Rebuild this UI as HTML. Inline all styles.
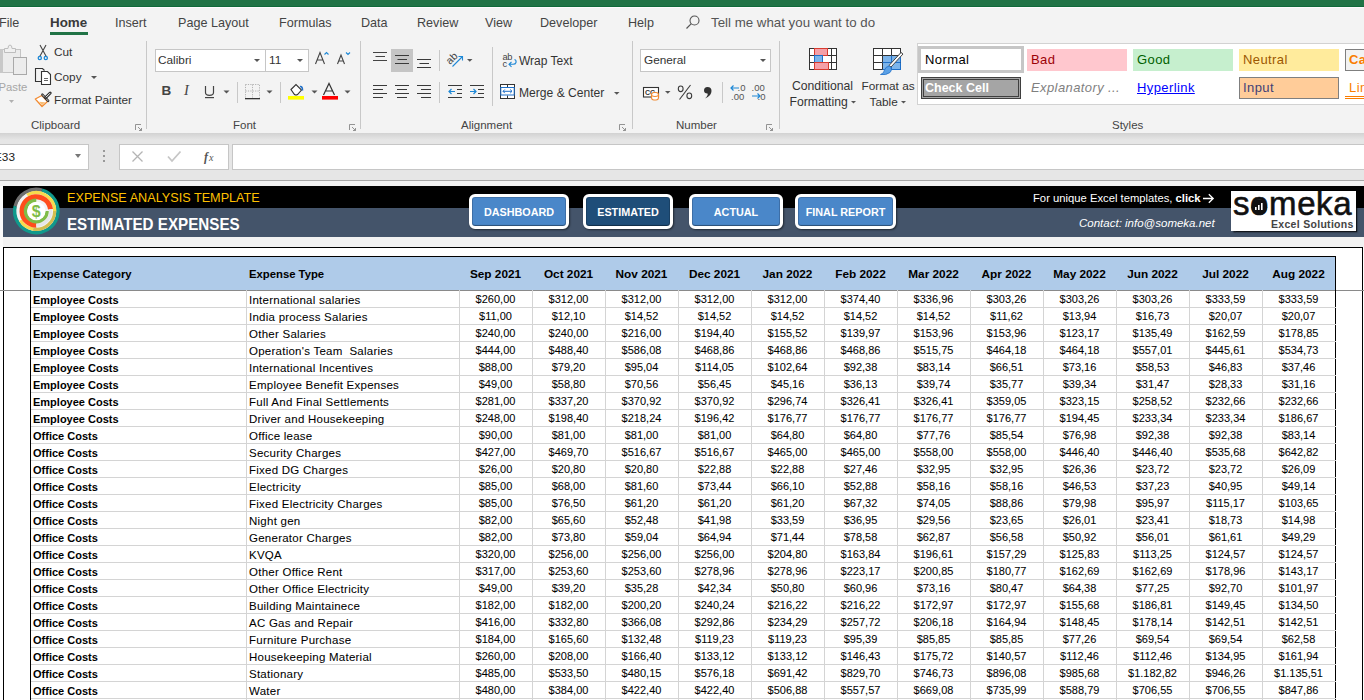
<!DOCTYPE html>
<html><head><meta charset="utf-8">
<style>
*{margin:0;padding:0;box-sizing:border-box;}
html,body{width:1364px;height:700px;overflow:hidden;background:#fff;font-family:"Liberation Sans",sans-serif;}
.a{position:absolute;white-space:nowrap;}
#title{position:absolute;left:0;top:0;width:1364px;height:7px;background:#217346;border-bottom:1px solid #10693a;}
#tabs{position:absolute;left:0;top:7px;width:1364px;height:31px;background:#f3f3f3;border-top:1px solid #fdfbfd;}
.tab{position:absolute;top:8px;font-size:12.6px;color:#444;line-height:15px;}
#ribbon{position:absolute;left:0;top:38px;width:1364px;height:95px;background:#f3f3f3;}
#shadow{position:absolute;left:0;top:133px;width:1364px;height:7px;background:linear-gradient(#d2d2d2,#e6e6e6);}
#fbar{position:absolute;left:0;top:140px;width:1364px;height:41px;background:#e6e6e6;border-bottom:1px solid #a6a6a6;}
.rt{position:absolute;font-size:11.8px;color:#333;line-height:14px;white-space:nowrap;}
.gl{position:absolute;top:118px;font-size:11.5px;color:#444;line-height:14px;white-space:nowrap;}
.sep{position:absolute;width:1px;background:#c8c8c8;}
.dd{position:absolute;width:0;height:0;border-left:3px solid transparent;border-right:3px solid transparent;border-top:3px solid #555;}
.combo{position:absolute;background:#fff;border:1px solid #c6c6c6;}
.launch{position:absolute;width:7px;height:7px;border-left:1px solid #888;border-top:1px solid #888;}
#sheet{position:absolute;left:0;top:181px;width:1364px;height:519px;background:#fff;}
.th{position:absolute;height:33px;line-height:35px;font-size:11.8px;font-weight:bold;color:#000;white-space:nowrap;}
.c{text-align:center;}
.tc{position:absolute;height:17px;line-height:20px;color:#000;white-space:nowrap;}
.tc.b{font-size:11px;font-weight:bold;}
.tc.t{font-size:11.5px;letter-spacing:0.25px;-webkit-text-stroke:0.05px #000;}
.tc.n{font-size:11px;text-align:center;line-height:18px;-webkit-text-stroke:0.05px #000;}
.btn{position:absolute;height:35px;border:3px solid #fff;border-radius:6px;background:#4a87c9;color:#fff;font-weight:bold;font-size:10.8px;line-height:30px;text-align:center;box-shadow:1px 1px 2px rgba(0,0,0,0.5), inset 0 -1px 1px rgba(0,0,0,0.3), inset 0 0 0 1px rgba(0,0,0,0.15);}
.btn.sel{background:#1f4e79;}
.hl{position:absolute;left:31px;width:1305px;height:1px;background:#d4d4d4;}
.vl{position:absolute;top:290px;height:410px;width:1px;background:#d4d4d4;}
</style></head><body>
<div id="title"></div>
<div id="tabs">
  <div class="tab" style="left:-1px;">File</div>
  <div class="tab" style="left:50px;font-weight:bold;color:#3a3a3a;font-size:13.4px;top:6.5px;">Home</div>
  <div style="position:absolute;left:50px;top:24px;width:38px;height:3px;background:#217346;"></div>
  <div class="tab" style="left:115px;">Insert</div>
  <div class="tab" style="left:178px;">Page Layout</div>
  <div class="tab" style="left:279px;">Formulas</div>
  <div class="tab" style="left:361px;">Data</div>
  <div class="tab" style="left:417px;">Review</div>
  <div class="tab" style="left:485px;">View</div>
  <div class="tab" style="left:540px;">Developer</div>
  <div class="tab" style="left:628px;">Help</div>
  <svg class="a" style="left:685px;top:6px;" width="16" height="16" viewBox="0 0 16 16"><circle cx="9.5" cy="6.5" r="4.5" fill="none" stroke="#555" stroke-width="1.1"/><line x1="6.3" y1="9.7" x2="1.5" y2="14.5" stroke="#555" stroke-width="1.2"/></svg>
  <div class="tab" style="left:711px;font-size:13.3px;top:7px;color:#555;">Tell me what you want to do</div>
</div>
<div id="ribbon">
<!-- Clipboard group (coords relative to ribbon top=38) -->
<svg class="a" style="left:0;top:0;" width="150" height="95" viewBox="0 38 150 95">
  <!-- paste clipboard -->
  <rect x="0.5" y="49.5" width="20" height="23" fill="#ebebeb" stroke="#c4c4c4" stroke-width="1"/>
  <rect x="0" y="49" width="3" height="24" fill="#c8c8c8"/>
  <path d="M4.5 52.5 V48.5 H8 Q8 45 10 45 Q12 45 12 48.5 H15.5 V52.5 Z" fill="#f0f0f0" stroke="#bdbdbd"/>
  <rect x="13.5" y="57.5" width="13" height="17" fill="#ececec" stroke="#a9a9a9"/>
  <path d="M9 100 h5 l-2.5 3 z" fill="#b0b0b0"/>
  <!-- scissors -->
  <path d="M40 45 L46.5 57 M46 45 L39.5 57" stroke="#444" stroke-width="1.1" fill="none"/>
  <circle cx="39.8" cy="58" r="1.6" fill="none" stroke="#1e88d6" stroke-width="1.3"/>
  <circle cx="45.8" cy="58" r="1.6" fill="none" stroke="#1e88d6" stroke-width="1.3"/>
  <!-- copy -->
  <path d="M41.5 81.5 H35.5 V68.5 H42.5 L44.5 70.5" fill="none" stroke="#333" stroke-width="1.1"/>
  <path d="M41.5 71.5 H47.5 L50.5 74.5 V84.5 H41.5 Z" fill="#fff" stroke="#333" stroke-width="1.1"/>
  <path d="M44 78.5 H48 M44 80.5 H48" stroke="#555" stroke-width="0.9"/>
  <!-- format painter -->
  <path d="M35.3 99 L41.8 95.5 L47.5 101.5 L42 106.5 Z" fill="#fff" stroke="#f28a30" stroke-width="1.2" stroke-linejoin="round"/>
  <path d="M38.8 101.8 L45.3 102.3 L42 105.2 Z" fill="#f9be78"/>
  <path d="M42.3 94.6 L48.2 100.9" stroke="#333" stroke-width="2.4" stroke-linecap="round"/>
  <path d="M42.3 94.6 L48.2 100.9" stroke="#fff" stroke-width="0.7"/>
  <path d="M45.6 97.6 L50.2 93" stroke="#333" stroke-width="3" stroke-linecap="round"/>
  <path d="M45.9 97.3 L50 93.2" stroke="#fff" stroke-width="1"/>
  <!-- launcher -->
  <path d="M135.5 130 V124.5 H141 M138 127 L141.5 130.5 M139 130.5 H141.5 V128" fill="none" stroke="#888" stroke-width="0.9"/>
</svg>
<div class="rt" style="left:-1.5px;top:42px;color:#a6a6a6;font-size:11.3px;">Paste</div>
<div class="rt" style="left:54px;top:7px;">Cut</div>
<div class="rt" style="left:54px;top:32px;">Copy</div>
<div class="dd" style="left:91px;top:38px;"></div>
<div class="rt" style="left:54px;top:55px;">Format Painter</div>
<div class="gl" style="left:31px;top:80px;">Clipboard</div>
<div class="sep" style="left:146px;top:3px;height:88px;"></div>

<!-- Font group -->
<div class="combo" style="left:155px;top:11px;width:111px;height:23px;"></div>
<div class="rt" style="left:158px;top:15px;color:#333;">Calibri</div>
<div class="dd" style="left:254px;top:21px;"></div>
<div class="combo" style="left:265px;top:11px;width:44px;height:23px;"></div>
<div class="rt" style="left:269px;top:15px;color:#333;">11</div>
<div class="dd" style="left:297px;top:21px;"></div>
<svg class="a" style="left:150px;top:0;" width="210" height="95" viewBox="150 38 210 95">
  <!-- grow/shrink -->
  <path d="M315.5 64 L320 52.5 L324.5 64 M317 60 H323" fill="none" stroke="#444" stroke-width="1.1"/>
  <path d="M324.5 54.5 L326.5 52.5 L328.5 54.5" fill="none" stroke="#1e88d6" stroke-width="1.1"/>
  <path d="M337.5 64 L341 55 L344.5 64 M339 61 H343" fill="none" stroke="#444" stroke-width="1.1"/>
  <path d="M346 52.5 L348 54.5 L350 52.5" fill="none" stroke="#1e88d6" stroke-width="1.1"/>
  <!-- sep lines -->
  <rect x="237" y="82" width="1" height="21" fill="#c8c8c8"/>
  <rect x="280" y="82" width="1" height="21" fill="#c8c8c8"/>
  <!-- underline -->
  <path d="M205.5 86 V92.5 Q205.5 95.3 209.5 95.3 Q213.5 95.3 213.5 92.5 V86" fill="none" stroke="#444" stroke-width="1.2"/>
  <rect x="205" y="97" width="9" height="1.2" fill="#444"/>
  <path d="M223.5 90.5 h6 l-3 3 z" fill="#555"/>
  <!-- borders -->
  <path d="M245.5 84.5 H259.5 V97.5 M245.5 84.5 V97.5 M252.5 84.5 V97.5 M245.5 91 H259.5" fill="none" stroke="#aaa" stroke-width="0.9" stroke-dasharray="1.2 1.2"/>
  <rect x="245" y="98" width="15" height="1.3" fill="#333"/>
  <path d="M266.5 90.5 h6 l-3 3 z" fill="#555"/>
  <!-- fill -->
  <path d="M291 89.5 L296 84.5 L301.5 90 L297.5 94.5 Q296 95.5 294.5 94.5 Z" fill="#fff" stroke="#333" stroke-width="1.1"/>
  <path d="M300 86.5 Q302.5 86 302.5 90.5" fill="none" stroke="#1e6fc8" stroke-width="1.6"/>
  <rect x="288" y="96" width="16" height="3.6" fill="#ffff00"/>
  <path d="M311.5 90.5 h6 l-3 3 z" fill="#555"/>
  <!-- font color -->
  <path d="M323.5 95 L329 83.5 L334.5 95 M325.5 91 H332.5" fill="none" stroke="#333" stroke-width="1.2"/>
  <rect x="322" y="96" width="16" height="3.6" fill="#ff0000"/>
  <path d="M344.5 90.5 h6 l-3 3 z" fill="#555"/>
  <path d="M349.5 130 V124.5 H355 M352 127 L355.5 130.5 M353 130.5 H355.5 V128" fill="none" stroke="#888" stroke-width="0.9"/>
</svg>
<div class="rt" style="left:161.5px;top:45.5px;font-size:13.5px;font-weight:bold;color:#444;">B</div>
<div class="rt" style="left:184px;top:45px;font-size:14.5px;font-style:italic;color:#444;font-family:'Liberation Serif',serif;">I</div>
<div class="gl" style="left:233px;top:80px;">Font</div>
<div class="sep" style="left:360px;top:3px;height:88px;"></div>
<!-- Alignment group -->
<svg class="a" style="left:360px;top:0;" width="280" height="95" viewBox="360 38 280 95">
  <g stroke="#444" stroke-width="1.1" fill="none">
    <path d="M373 52.5 H387 M375.5 56.5 H385 M373 60.5 H387"/>
  </g>
  <rect x="391" y="49" width="22" height="23" fill="#c5c5c5"/>
  <g stroke="#3a3a3a" stroke-width="1.1" fill="none">
    <path d="M395 55.5 H409 M397.5 59.5 H407 M395 63.5 H409"/>
    <path d="M417 59.5 H431 M419.5 63.5 H429 M417 67.5 H431"/>
    <path d="M373 85.5 H387 M373 89.5 H383 M373 93.5 H387 M373 97.5 H383"/>
    <path d="M395 85.5 H409 M397 89.5 H407 M395 93.5 H409 M397 97.5 H407"/>
    <path d="M417 85.5 H431 M421 89.5 H431 M417 93.5 H431 M421 97.5 H431"/>
    <path d="M448 85.5 H462 M457 89.5 H462 M457 93.5 H462 M448 97.5 H462"/>
    <path d="M470 85.5 H484 M478 89.5 H484 M478 93.5 H484 M470 97.5 H484"/>
  </g>
  <path d="M449 91.5 H455 M451.5 89 L449 91.5 L451.5 94" stroke="#1e88d6" stroke-width="1.2" fill="none"/>
  <path d="M470 91.5 H476 M473.5 89 L476 91.5 L473.5 94" stroke="#1e88d6" stroke-width="1.2" fill="none"/>
  <rect x="439" y="50" width="1" height="21" fill="#c8c8c8"/>
  <rect x="439" y="82" width="1" height="21" fill="#c8c8c8"/>
  <rect x="492" y="47" width="1" height="59" fill="#c8c8c8"/>
  <!-- orientation -->
  <text x="0" y="0" transform="translate(450 65) rotate(-45)" font-family="Liberation Sans" font-size="10.5" fill="#444">ab</text>
  <path d="M452.5 66.5 L462.5 56.5 M458.5 56.5 H462.5 V60.5" stroke="#1e88d6" stroke-width="1.1" fill="none"/>
  <path d="M467 59 h5.5 l-2.75 2.8 z" fill="#555"/>
  <!-- wrap text icon -->
  <text x="502.5" y="59.5" font-family="Liberation Sans" font-size="9.3" fill="#444" letter-spacing="-0.3">ab</text>
  <text x="502.5" y="66.5" font-family="Liberation Sans" font-size="9.3" fill="#444">c</text>
  <path d="M514.5 59.5 Q516.5 60 516 62.5 Q515.5 64.3 513 64.3 H509.5 M511.5 62 L509 64.3 L511.5 66.8" stroke="#1e88d6" stroke-width="1.1" fill="none"/>
  <!-- merge icon -->
  <rect x="500.5" y="84.5" width="14" height="14" fill="#fff" stroke="#333" stroke-width="1"/>
  <path d="M507.5 84.5 V87.5 M507.5 95.5 V98.5" stroke="#333" stroke-width="1"/>
  <rect x="500.8" y="87.5" width="13.4" height="7.5" fill="none" stroke="#1e6fc8" stroke-width="1"/>
  <path d="M503 91.3 H512 M504.8 89.5 L503 91.3 L504.8 93.1 M510.2 89.5 L512 91.3 L510.2 93.1" stroke="#1e6fc8" stroke-width="1" fill="none"/>
  <path d="M614 92 h5.5 l-2.75 2.8 z" fill="#555"/>
  <path d="M619.5 130 V124.5 H625 M622 127 L625.5 130.5 M623 130.5 H625.5 V128" fill="none" stroke="#888" stroke-width="0.9"/>
</svg>
<div class="rt" style="left:519px;top:16px;font-size:12px;">Wrap Text</div>
<div class="rt" style="left:519px;top:48px;font-size:12.1px;">Merge &amp; Center</div>
<div class="gl" style="left:461px;top:80px;">Alignment</div>
<div class="sep" style="left:632px;top:3px;height:88px;"></div>
<!-- Number group -->
<div class="combo" style="left:640px;top:11px;width:131px;height:23px;"></div>
<div class="rt" style="left:644px;top:15px;color:#333;">General</div>
<div class="dd" style="left:760px;top:21px;"></div>
<svg class="a" style="left:632px;top:0;" width="150" height="95" viewBox="632 38 150 95">
  <rect x="643.5" y="87.5" width="15" height="9.5" fill="#fff" stroke="#333" stroke-width="1.1"/>
  <text x="645" y="95" font-family="Liberation Sans" font-size="7" font-weight="bold" fill="#333">CC</text>
  <g fill="#fff" stroke="#f28a30" stroke-width="1.1">
    <rect x="651.5" y="92.5" width="7" height="7.5" rx="2.5"/>
    <path d="M651.5 95.5 Q655 97.5 658.5 95.5"/>
  </g>
  <path d="M665 91 h5.5 l-2.75 2.8 z" fill="#555"/>
  <g fill="none" stroke="#3a3a3a" stroke-width="1.1"><ellipse cx="680.7" cy="88.8" rx="2.4" ry="2.8"/><ellipse cx="689.3" cy="95.8" rx="2.4" ry="2.8"/><path d="M690.5 85 L679.5 99.5"/></g>
  <path d="M707.5 87 Q711.5 87 711.5 91 Q711.5 96 705 98.5 Q708.5 95 707.5 93.5 Q704 93.5 704 90.5 Q704 87 707.5 87 Z" fill="#333"/>
  <rect x="722" y="82" width="1" height="21" fill="#c8c8c8"/>
  <text x="737.5" y="90.5" font-family="Liberation Sans" font-size="9.5" fill="#555">.0</text>
  <text x="731" y="99.5" font-family="Liberation Sans" font-size="9.5" fill="#555">.00</text>
  <path d="M731 88 H739 M733.5 85.5 L731 88 L733.5 90.5" stroke="#1e88d6" stroke-width="1.2" fill="none"/>
  <text x="751.5" y="90.5" font-family="Liberation Sans" font-size="9.5" fill="#555">.00</text>
  <text x="757.5" y="99.5" font-family="Liberation Sans" font-size="9.5" fill="#555">.0</text>
  <path d="M752 96 H760 M757.5 93.5 L760 96 L757.5 98.5" stroke="#1e88d6" stroke-width="1.2" fill="none"/>
  <path d="M766.5 130 V124.5 H772 M769 127 L772.5 130.5 M770 130.5 H772.5 V128" fill="none" stroke="#888" stroke-width="0.9"/>
</svg>
<div class="gl" style="left:676px;top:80px;">Number</div>
<div class="sep" style="left:779px;top:3px;height:88px;"></div>

<!-- Styles: conditional formatting + format as table -->
<svg class="a" style="left:780px;top:0;" width="140" height="95" viewBox="780 38 140 95">
  <rect x="809.5" y="48.5" width="27" height="21" fill="#fff" stroke="#333" stroke-width="1"/>
  <path d="M809.5 55.5 H836.5 M809.5 62.5 H836.5 M814.5 48.5 V69.5 M831.5 48.5 V69.5" stroke="#333" stroke-width="1" fill="none"/>
  <rect x="814.5" y="48.5" width="13" height="7" fill="#f4a0a8" stroke="#d83b2f" stroke-width="1"/>
  <rect x="814.5" y="55.5" width="8" height="7" fill="#7cb4ea" stroke="#1e6fc8" stroke-width="1"/>
  <rect x="814.5" y="62.5" width="14" height="7" fill="#f4a0a8" stroke="#d83b2f" stroke-width="1"/>
  <rect x="873.5" y="48.5" width="27" height="21" fill="#fff" stroke="#333" stroke-width="1"/>
  <rect x="882.5" y="55.5" width="18" height="14" fill="#7cb4ea" stroke="#1e6fc8" stroke-width="1"/>
  <path d="M873.5 55.5 H900.5 M873.5 62.5 H900.5 M882.5 48.5 V69.5 M891.5 48.5 V69.5" stroke="#333" stroke-width="1" fill="none"/>
  <path d="M882.5 62.5 H900.5 M891.5 55.5 V69.5" stroke="#1e6fc8" stroke-width="1" fill="none"/>
  <path d="M903 54 L891 67 L889 65.5 L901 52.5 Z" fill="#fff" stroke="#444" stroke-width="1"/>
  <path d="M889.5 66 Q893 69 890 72.5 Q886 75.5 880.5 74.5 Q884 73.5 884.5 70 Q885.5 66.5 889.5 66 Z" fill="#5aa0e6" stroke="#1e6fc8" stroke-width="0.8"/>
  <path d="M851 101 h5 l-2.5 2.6 z" fill="#555"/>
  <path d="M901 101 h5 l-2.5 2.6 z" fill="#555"/>
</svg>
<div class="rt" style="left:792px;top:41px;font-size:12.2px;">Conditional</div>
<div class="rt" style="left:789.5px;top:57px;font-size:12.2px;">Formatting</div>
<div class="rt" style="left:861.5px;top:41px;">Format as</div>
<div class="rt" style="left:869.5px;top:57px;">Table</div>
<!-- Styles gallery -->
<div class="a" style="left:917px;top:5px;width:460px;height:62px;background:#fff;border:1px solid #d2d2d2;"></div>
<div class="a" style="left:918px;top:8px;width:106px;height:27px;border:3px solid #c6c6c6;background:#fff;"></div>
<div class="rt" style="left:925px;top:15px;color:#000;font-size:13px;letter-spacing:0.4px;">Normal</div>
<div class="a" style="left:1027px;top:11px;width:100px;height:22px;background:#ffc7ce;"></div>
<div class="rt" style="left:1031px;top:15px;color:#9c0006;font-size:13px;letter-spacing:0.4px;">Bad</div>
<div class="a" style="left:1133px;top:11px;width:100px;height:22px;background:#c6efce;"></div>
<div class="rt" style="left:1137px;top:15px;color:#006100;font-size:13px;letter-spacing:0.4px;">Good</div>
<div class="a" style="left:1239px;top:11px;width:100px;height:22px;background:#ffeb9c;"></div>
<div class="rt" style="left:1243px;top:15px;color:#9c5700;font-size:13px;letter-spacing:0.4px;">Neutral</div>
<div class="a" style="left:1345px;top:11px;width:30px;height:22px;background:#f2f2f2;border:1px solid #7f7f7f;"></div>
<div class="rt" style="left:1349px;top:15px;color:#fa7d00;font-size:13px;letter-spacing:0.4px;font-weight:bold;">Ca</div>
<div class="a" style="left:921px;top:39px;width:100px;height:22px;background:#a5a5a5;border:3px double #3f3f3f;"></div>
<div class="rt" style="left:925px;top:43px;color:#fff;font-size:12.5px;font-weight:bold;">Check Cell</div>
<div class="rt" style="left:1031px;top:43px;color:#7f7f7f;font-size:13px;letter-spacing:0.4px;font-style:italic;">Explanatory ...</div>
<div class="rt" style="left:1137px;top:43px;color:#0000ff;font-size:13px;letter-spacing:0.4px;text-decoration:underline;">Hyperlink</div>
<div class="a" style="left:1239px;top:39px;width:100px;height:22px;background:#ffcc99;border:1px solid #7f7f7f;"></div>
<div class="rt" style="left:1243px;top:43px;color:#3f3f76;font-size:13px;letter-spacing:0.4px;">Input</div>
<div class="rt" style="left:1349px;top:43px;color:#fa7d00;font-size:13px;letter-spacing:0.4px;">Lin</div>
<div class="a" style="left:1345px;top:58px;width:20px;height:3px;border-top:1px solid #fa7d00;border-bottom:1px solid #fa7d00;"></div>
<div class="gl" style="left:1112px;top:80px;">Styles</div>

</div>
<div id="shadow"></div>
<div id="fbar">
<div class="a" style="left:-2px;top:4px;width:91px;height:26px;background:#fff;border:1px solid #c6c6c6;"></div>
<div class="rt" style="left:-6px;top:10px;font-size:11.8px;color:#222;">E33</div>
<div class="a" style="left:75px;top:14px;width:0;height:0;border-left:3.6px solid transparent;border-right:3.6px solid transparent;border-top:4px solid #777;"></div>
<div class="a" style="left:103px;top:10px;width:2px;height:2px;background:#999;"></div>
<div class="a" style="left:103px;top:15px;width:2px;height:2px;background:#999;"></div>
<div class="a" style="left:103px;top:20px;width:2px;height:2px;background:#999;"></div>
<div class="a" style="left:119px;top:4px;width:110px;height:26px;background:#fff;border:1px solid #c6c6c6;"></div>
<svg class="a" style="left:119px;top:4px;" width="110" height="26" viewBox="119 144 110 26">
  <path d="M132.5 151.5 L142.5 161.5 M142.5 151.5 L132.5 161.5" stroke="#b4b4b4" stroke-width="1.3"/>
  <path d="M168 156.5 L172 161 L180.5 151.5" stroke="#c6c6c6" stroke-width="1.8" fill="none"/>
  <text x="204" y="161" font-family="Liberation Serif" font-style="italic" font-weight="bold" font-size="12" fill="#555">f</text>
  <text x="209" y="161" font-family="Liberation Serif" font-style="italic" font-size="10" fill="#555">x</text>
</svg>
<div class="a" style="left:232px;top:4px;width:1140px;height:26px;background:#fff;border:1px solid #c6c6c6;"></div>

</div>
<div id="sheet"></div>
<div class="a" style="left:0;top:181px;width:1364px;height:66px;background:#f2f2f2;"></div>
<div class="a" style="left:0;top:186px;width:3px;height:61px;background:#fafafa;"></div>
<div class="a" style="left:3px;top:186px;width:1361px;height:22px;background:#000;"></div>
<div class="a" style="left:3px;top:208px;width:1361px;height:29px;background:#44546a;"></div>
<!-- logo -->
<svg class="a" style="left:10px;top:184px;" width="54" height="54" viewBox="0 0 54 54">
  <g transform="translate(26.3 27)">
    <circle r="20.5" fill="#f2f2f2"/>
    <path d="M5.62 -20.96 A21.7 21.7 0 1 1 -21.14 -4.88" stroke="#10998c" stroke-width="3.4" fill="none"/>
    <path d="M-21.14 -4.88 A21.7 21.7 0 0 1 5.62 -20.96" stroke="#6e6e6e" stroke-width="3.4" fill="none"/>
    <path d="M-9.20 -15.93 A18.4 18.4 0 0 1 18.40 0.00" stroke="#f6dc4c" stroke-width="3.2" fill="none"/>
    <path d="M18.40 0.00 A18.4 18.4 0 0 1 -3.20 18.12" stroke="#d2bd50" stroke-width="3.2" fill="none"/>
    <path d="M-3.20 18.12 A18.4 18.4 0 0 1 -15.93 9.20" stroke="#f6dc4c" stroke-width="3.2" fill="none"/>
    <path d="M-15.16 8.75 A17.5 17.5 0 0 1 -8.75 -15.16" stroke="#f4f4f4" stroke-width="1.6" fill="none"/>
    <path d="M0.00 14.30 A14.3 14.3 0 1 1 14.19 -1.74" stroke="#ff4d1c" stroke-width="5" fill="none"/>
    <path d="M14.19 -1.74 A14.3 14.3 0 0 1 0.00 14.30" stroke="#e6e6ea" stroke-width="3" fill="none"/>
    <path d="M10.80 0.00 A10.8 10.8 0 1 1 -0.00 -10.80" stroke="#7fbc48" stroke-width="3.4" fill="none"/>
    <circle r="9.2" fill="#fff"/>
    <text x="0" y="6" text-anchor="middle" font-family="Liberation Sans" font-size="16" font-weight="bold" fill="#7fbc48">$</text>
  </g>
</svg>
<div class="a" style="left:67px;top:190px;font-size:13.7px;color:#ffc000;line-height:16px;transform:scaleX(0.925);transform-origin:0 0;">EXPENSE ANALYSIS TEMPLATE</div>
<div class="a" style="left:67px;top:215px;font-size:16.5px;font-weight:bold;color:#fff;line-height:18px;transform:scaleX(0.92);transform-origin:0 0;">ESTIMATED EXPENSES</div>
<!-- buttons -->
<div class="btn" style="left:469px;top:193.5px;width:100px;">DASHBOARD</div>
<div class="btn sel" style="left:583px;top:193.5px;width:90px;">ESTIMATED</div>
<div class="btn" style="left:689px;top:193.5px;width:94px;">ACTUAL</div>
<div class="btn" style="left:795px;top:193.5px;width:101px;">FINAL REPORT</div>
<!-- right -->
<div class="a" style="left:1033px;top:191px;font-size:11.25px;color:#fff;line-height:15px;">For unique Excel templates, <b>click</b></div>
<svg class="a" style="left:1202px;top:193px;" width="13" height="11" viewBox="0 0 13 11"><path d="M1 5.5 H11 M6.8 1.2 L11.2 5.5 L6.8 9.8" stroke="#fff" stroke-width="1.3" fill="none"/></svg>
<div class="a" style="left:1079px;top:216px;font-size:11.5px;color:#fff;line-height:15px;font-style:italic;">Contact: info@someka.net</div>
<div class="a" style="left:1231px;top:191px;width:125px;height:40px;background:#fff;box-shadow:1.5px 1.5px 1.5px rgba(0,0,0,0.75);"></div>
<div class="a" style="left:1233px;top:187px;font-size:33px;color:#111;line-height:34px;letter-spacing:0.6px;-webkit-text-stroke:0.6px #111;">someka</div>
<svg class="a" style="left:1250px;top:197px;" width="18" height="19" viewBox="0 0 18 19"><circle cx="9.2" cy="10.2" r="7.9" fill="#111"/><rect x="5" y="10" width="1.6" height="3" fill="#fff"/><rect x="8" y="8" width="1.6" height="5" fill="#fff"/><rect x="11" y="6" width="1.6" height="7" fill="#fff"/></svg>
<div class="a" style="left:1271px;top:218px;font-size:10.5px;font-weight:bold;color:#444;line-height:12px;letter-spacing:0.3px;">Excel Solutions</div>

<div class="a" style="left:3px;top:247px;width:1360px;height:460px;border:1px solid #000;background:#fff;"></div>
<div class="a" style="left:30px;top:256px;width:1306px;height:34px;border:1px solid #000;border-bottom:none;background:#afcbe9;"></div>
<div class="a" style="left:0;top:290px;width:1364px;height:1px;background:#8a8a8a;"></div>
<div class="a" style="left:30px;top:290px;width:1px;height:410px;background:#000;"></div>
<div class="a" style="left:1335px;top:290px;width:1px;height:410px;background:#000;"></div>
<div class="th" style="left:33px;top:257px;font-size:11.3px;">Expense Category</div>
<div class="th" style="left:249px;top:257px;font-size:11.3px;">Expense Type</div>
<div class="th c" style="left:459px;top:257px;width:73px;">Sep 2021</div>
<div class="th c" style="left:532px;top:257px;width:73px;">Oct 2021</div>
<div class="th c" style="left:605px;top:257px;width:73px;">Nov 2021</div>
<div class="th c" style="left:678px;top:257px;width:73px;">Dec 2021</div>
<div class="th c" style="left:751px;top:257px;width:73px;">Jan 2022</div>
<div class="th c" style="left:824px;top:257px;width:73px;">Feb 2022</div>
<div class="th c" style="left:897px;top:257px;width:73px;">Mar 2022</div>
<div class="th c" style="left:970px;top:257px;width:73px;">Apr 2022</div>
<div class="th c" style="left:1043px;top:257px;width:73px;">May 2022</div>
<div class="th c" style="left:1116px;top:257px;width:73px;">Jun 2022</div>
<div class="th c" style="left:1189px;top:257px;width:73px;">Jul 2022</div>
<div class="th c" style="left:1262px;top:257px;width:73px;">Aug 2022</div>
<div class="tc b" style="left:33px;top:290px;">Employee Costs</div>
<div class="tc t" style="left:249px;top:290px;">International salaries</div>
<div class="tc n" style="left:459px;top:290px;width:73px;">$260,00</div>
<div class="tc n" style="left:532px;top:290px;width:73px;">$312,00</div>
<div class="tc n" style="left:605px;top:290px;width:73px;">$312,00</div>
<div class="tc n" style="left:678px;top:290px;width:73px;">$312,00</div>
<div class="tc n" style="left:751px;top:290px;width:73px;">$312,00</div>
<div class="tc n" style="left:824px;top:290px;width:73px;">$374,40</div>
<div class="tc n" style="left:897px;top:290px;width:73px;">$336,96</div>
<div class="tc n" style="left:970px;top:290px;width:73px;">$303,26</div>
<div class="tc n" style="left:1043px;top:290px;width:73px;">$303,26</div>
<div class="tc n" style="left:1116px;top:290px;width:73px;">$303,26</div>
<div class="tc n" style="left:1189px;top:290px;width:73px;">$333,59</div>
<div class="tc n" style="left:1262px;top:290px;width:73px;">$333,59</div>
<div class="tc b" style="left:33px;top:307px;">Employee Costs</div>
<div class="tc t" style="left:249px;top:307px;">India process Salaries</div>
<div class="tc n" style="left:459px;top:307px;width:73px;">$11,00</div>
<div class="tc n" style="left:532px;top:307px;width:73px;">$12,10</div>
<div class="tc n" style="left:605px;top:307px;width:73px;">$14,52</div>
<div class="tc n" style="left:678px;top:307px;width:73px;">$14,52</div>
<div class="tc n" style="left:751px;top:307px;width:73px;">$14,52</div>
<div class="tc n" style="left:824px;top:307px;width:73px;">$14,52</div>
<div class="tc n" style="left:897px;top:307px;width:73px;">$14,52</div>
<div class="tc n" style="left:970px;top:307px;width:73px;">$11,62</div>
<div class="tc n" style="left:1043px;top:307px;width:73px;">$13,94</div>
<div class="tc n" style="left:1116px;top:307px;width:73px;">$16,73</div>
<div class="tc n" style="left:1189px;top:307px;width:73px;">$20,07</div>
<div class="tc n" style="left:1262px;top:307px;width:73px;">$20,07</div>
<div class="tc b" style="left:33px;top:324px;">Employee Costs</div>
<div class="tc t" style="left:249px;top:324px;">Other Salaries</div>
<div class="tc n" style="left:459px;top:324px;width:73px;">$240,00</div>
<div class="tc n" style="left:532px;top:324px;width:73px;">$240,00</div>
<div class="tc n" style="left:605px;top:324px;width:73px;">$216,00</div>
<div class="tc n" style="left:678px;top:324px;width:73px;">$194,40</div>
<div class="tc n" style="left:751px;top:324px;width:73px;">$155,52</div>
<div class="tc n" style="left:824px;top:324px;width:73px;">$139,97</div>
<div class="tc n" style="left:897px;top:324px;width:73px;">$153,96</div>
<div class="tc n" style="left:970px;top:324px;width:73px;">$153,96</div>
<div class="tc n" style="left:1043px;top:324px;width:73px;">$123,17</div>
<div class="tc n" style="left:1116px;top:324px;width:73px;">$135,49</div>
<div class="tc n" style="left:1189px;top:324px;width:73px;">$162,59</div>
<div class="tc n" style="left:1262px;top:324px;width:73px;">$178,85</div>
<div class="tc b" style="left:33px;top:341px;">Employee Costs</div>
<div class="tc t" style="left:249px;top:341px;">Operation's Team&nbsp; Salaries</div>
<div class="tc n" style="left:459px;top:341px;width:73px;">$444,00</div>
<div class="tc n" style="left:532px;top:341px;width:73px;">$488,40</div>
<div class="tc n" style="left:605px;top:341px;width:73px;">$586,08</div>
<div class="tc n" style="left:678px;top:341px;width:73px;">$468,86</div>
<div class="tc n" style="left:751px;top:341px;width:73px;">$468,86</div>
<div class="tc n" style="left:824px;top:341px;width:73px;">$468,86</div>
<div class="tc n" style="left:897px;top:341px;width:73px;">$515,75</div>
<div class="tc n" style="left:970px;top:341px;width:73px;">$464,18</div>
<div class="tc n" style="left:1043px;top:341px;width:73px;">$464,18</div>
<div class="tc n" style="left:1116px;top:341px;width:73px;">$557,01</div>
<div class="tc n" style="left:1189px;top:341px;width:73px;">$445,61</div>
<div class="tc n" style="left:1262px;top:341px;width:73px;">$534,73</div>
<div class="tc b" style="left:33px;top:358px;">Employee Costs</div>
<div class="tc t" style="left:249px;top:358px;">International Incentives</div>
<div class="tc n" style="left:459px;top:358px;width:73px;">$88,00</div>
<div class="tc n" style="left:532px;top:358px;width:73px;">$79,20</div>
<div class="tc n" style="left:605px;top:358px;width:73px;">$95,04</div>
<div class="tc n" style="left:678px;top:358px;width:73px;">$114,05</div>
<div class="tc n" style="left:751px;top:358px;width:73px;">$102,64</div>
<div class="tc n" style="left:824px;top:358px;width:73px;">$92,38</div>
<div class="tc n" style="left:897px;top:358px;width:73px;">$83,14</div>
<div class="tc n" style="left:970px;top:358px;width:73px;">$66,51</div>
<div class="tc n" style="left:1043px;top:358px;width:73px;">$73,16</div>
<div class="tc n" style="left:1116px;top:358px;width:73px;">$58,53</div>
<div class="tc n" style="left:1189px;top:358px;width:73px;">$46,83</div>
<div class="tc n" style="left:1262px;top:358px;width:73px;">$37,46</div>
<div class="tc b" style="left:33px;top:375px;">Employee Costs</div>
<div class="tc t" style="left:249px;top:375px;">Employee Benefit Expenses</div>
<div class="tc n" style="left:459px;top:375px;width:73px;">$49,00</div>
<div class="tc n" style="left:532px;top:375px;width:73px;">$58,80</div>
<div class="tc n" style="left:605px;top:375px;width:73px;">$70,56</div>
<div class="tc n" style="left:678px;top:375px;width:73px;">$56,45</div>
<div class="tc n" style="left:751px;top:375px;width:73px;">$45,16</div>
<div class="tc n" style="left:824px;top:375px;width:73px;">$36,13</div>
<div class="tc n" style="left:897px;top:375px;width:73px;">$39,74</div>
<div class="tc n" style="left:970px;top:375px;width:73px;">$35,77</div>
<div class="tc n" style="left:1043px;top:375px;width:73px;">$39,34</div>
<div class="tc n" style="left:1116px;top:375px;width:73px;">$31,47</div>
<div class="tc n" style="left:1189px;top:375px;width:73px;">$28,33</div>
<div class="tc n" style="left:1262px;top:375px;width:73px;">$31,16</div>
<div class="tc b" style="left:33px;top:392px;">Employee Costs</div>
<div class="tc t" style="left:249px;top:392px;">Full And Final Settlements</div>
<div class="tc n" style="left:459px;top:392px;width:73px;">$281,00</div>
<div class="tc n" style="left:532px;top:392px;width:73px;">$337,20</div>
<div class="tc n" style="left:605px;top:392px;width:73px;">$370,92</div>
<div class="tc n" style="left:678px;top:392px;width:73px;">$370,92</div>
<div class="tc n" style="left:751px;top:392px;width:73px;">$296,74</div>
<div class="tc n" style="left:824px;top:392px;width:73px;">$326,41</div>
<div class="tc n" style="left:897px;top:392px;width:73px;">$326,41</div>
<div class="tc n" style="left:970px;top:392px;width:73px;">$359,05</div>
<div class="tc n" style="left:1043px;top:392px;width:73px;">$323,15</div>
<div class="tc n" style="left:1116px;top:392px;width:73px;">$258,52</div>
<div class="tc n" style="left:1189px;top:392px;width:73px;">$232,66</div>
<div class="tc n" style="left:1262px;top:392px;width:73px;">$232,66</div>
<div class="tc b" style="left:33px;top:409px;">Employee Costs</div>
<div class="tc t" style="left:249px;top:409px;">Driver and Housekeeping</div>
<div class="tc n" style="left:459px;top:409px;width:73px;">$248,00</div>
<div class="tc n" style="left:532px;top:409px;width:73px;">$198,40</div>
<div class="tc n" style="left:605px;top:409px;width:73px;">$218,24</div>
<div class="tc n" style="left:678px;top:409px;width:73px;">$196,42</div>
<div class="tc n" style="left:751px;top:409px;width:73px;">$176,77</div>
<div class="tc n" style="left:824px;top:409px;width:73px;">$176,77</div>
<div class="tc n" style="left:897px;top:409px;width:73px;">$176,77</div>
<div class="tc n" style="left:970px;top:409px;width:73px;">$176,77</div>
<div class="tc n" style="left:1043px;top:409px;width:73px;">$194,45</div>
<div class="tc n" style="left:1116px;top:409px;width:73px;">$233,34</div>
<div class="tc n" style="left:1189px;top:409px;width:73px;">$233,34</div>
<div class="tc n" style="left:1262px;top:409px;width:73px;">$186,67</div>
<div class="tc b" style="left:33px;top:426px;">Office Costs</div>
<div class="tc t" style="left:249px;top:426px;">Office lease</div>
<div class="tc n" style="left:459px;top:426px;width:73px;">$90,00</div>
<div class="tc n" style="left:532px;top:426px;width:73px;">$81,00</div>
<div class="tc n" style="left:605px;top:426px;width:73px;">$81,00</div>
<div class="tc n" style="left:678px;top:426px;width:73px;">$81,00</div>
<div class="tc n" style="left:751px;top:426px;width:73px;">$64,80</div>
<div class="tc n" style="left:824px;top:426px;width:73px;">$64,80</div>
<div class="tc n" style="left:897px;top:426px;width:73px;">$77,76</div>
<div class="tc n" style="left:970px;top:426px;width:73px;">$85,54</div>
<div class="tc n" style="left:1043px;top:426px;width:73px;">$76,98</div>
<div class="tc n" style="left:1116px;top:426px;width:73px;">$92,38</div>
<div class="tc n" style="left:1189px;top:426px;width:73px;">$92,38</div>
<div class="tc n" style="left:1262px;top:426px;width:73px;">$83,14</div>
<div class="tc b" style="left:33px;top:443px;">Office Costs</div>
<div class="tc t" style="left:249px;top:443px;">Security Charges</div>
<div class="tc n" style="left:459px;top:443px;width:73px;">$427,00</div>
<div class="tc n" style="left:532px;top:443px;width:73px;">$469,70</div>
<div class="tc n" style="left:605px;top:443px;width:73px;">$516,67</div>
<div class="tc n" style="left:678px;top:443px;width:73px;">$516,67</div>
<div class="tc n" style="left:751px;top:443px;width:73px;">$465,00</div>
<div class="tc n" style="left:824px;top:443px;width:73px;">$465,00</div>
<div class="tc n" style="left:897px;top:443px;width:73px;">$558,00</div>
<div class="tc n" style="left:970px;top:443px;width:73px;">$558,00</div>
<div class="tc n" style="left:1043px;top:443px;width:73px;">$446,40</div>
<div class="tc n" style="left:1116px;top:443px;width:73px;">$446,40</div>
<div class="tc n" style="left:1189px;top:443px;width:73px;">$535,68</div>
<div class="tc n" style="left:1262px;top:443px;width:73px;">$642,82</div>
<div class="tc b" style="left:33px;top:460px;">Office Costs</div>
<div class="tc t" style="left:249px;top:460px;">Fixed DG Charges</div>
<div class="tc n" style="left:459px;top:460px;width:73px;">$26,00</div>
<div class="tc n" style="left:532px;top:460px;width:73px;">$20,80</div>
<div class="tc n" style="left:605px;top:460px;width:73px;">$20,80</div>
<div class="tc n" style="left:678px;top:460px;width:73px;">$22,88</div>
<div class="tc n" style="left:751px;top:460px;width:73px;">$22,88</div>
<div class="tc n" style="left:824px;top:460px;width:73px;">$27,46</div>
<div class="tc n" style="left:897px;top:460px;width:73px;">$32,95</div>
<div class="tc n" style="left:970px;top:460px;width:73px;">$32,95</div>
<div class="tc n" style="left:1043px;top:460px;width:73px;">$26,36</div>
<div class="tc n" style="left:1116px;top:460px;width:73px;">$23,72</div>
<div class="tc n" style="left:1189px;top:460px;width:73px;">$23,72</div>
<div class="tc n" style="left:1262px;top:460px;width:73px;">$26,09</div>
<div class="tc b" style="left:33px;top:477px;">Office Costs</div>
<div class="tc t" style="left:249px;top:477px;">Electricity</div>
<div class="tc n" style="left:459px;top:477px;width:73px;">$85,00</div>
<div class="tc n" style="left:532px;top:477px;width:73px;">$68,00</div>
<div class="tc n" style="left:605px;top:477px;width:73px;">$81,60</div>
<div class="tc n" style="left:678px;top:477px;width:73px;">$73,44</div>
<div class="tc n" style="left:751px;top:477px;width:73px;">$66,10</div>
<div class="tc n" style="left:824px;top:477px;width:73px;">$52,88</div>
<div class="tc n" style="left:897px;top:477px;width:73px;">$58,16</div>
<div class="tc n" style="left:970px;top:477px;width:73px;">$58,16</div>
<div class="tc n" style="left:1043px;top:477px;width:73px;">$46,53</div>
<div class="tc n" style="left:1116px;top:477px;width:73px;">$37,23</div>
<div class="tc n" style="left:1189px;top:477px;width:73px;">$40,95</div>
<div class="tc n" style="left:1262px;top:477px;width:73px;">$49,14</div>
<div class="tc b" style="left:33px;top:494px;">Office Costs</div>
<div class="tc t" style="left:249px;top:494px;">Fixed Electricity Charges</div>
<div class="tc n" style="left:459px;top:494px;width:73px;">$85,00</div>
<div class="tc n" style="left:532px;top:494px;width:73px;">$76,50</div>
<div class="tc n" style="left:605px;top:494px;width:73px;">$61,20</div>
<div class="tc n" style="left:678px;top:494px;width:73px;">$61,20</div>
<div class="tc n" style="left:751px;top:494px;width:73px;">$61,20</div>
<div class="tc n" style="left:824px;top:494px;width:73px;">$67,32</div>
<div class="tc n" style="left:897px;top:494px;width:73px;">$74,05</div>
<div class="tc n" style="left:970px;top:494px;width:73px;">$88,86</div>
<div class="tc n" style="left:1043px;top:494px;width:73px;">$79,98</div>
<div class="tc n" style="left:1116px;top:494px;width:73px;">$95,97</div>
<div class="tc n" style="left:1189px;top:494px;width:73px;">$115,17</div>
<div class="tc n" style="left:1262px;top:494px;width:73px;">$103,65</div>
<div class="tc b" style="left:33px;top:511px;">Office Costs</div>
<div class="tc t" style="left:249px;top:511px;">Night gen</div>
<div class="tc n" style="left:459px;top:511px;width:73px;">$82,00</div>
<div class="tc n" style="left:532px;top:511px;width:73px;">$65,60</div>
<div class="tc n" style="left:605px;top:511px;width:73px;">$52,48</div>
<div class="tc n" style="left:678px;top:511px;width:73px;">$41,98</div>
<div class="tc n" style="left:751px;top:511px;width:73px;">$33,59</div>
<div class="tc n" style="left:824px;top:511px;width:73px;">$36,95</div>
<div class="tc n" style="left:897px;top:511px;width:73px;">$29,56</div>
<div class="tc n" style="left:970px;top:511px;width:73px;">$23,65</div>
<div class="tc n" style="left:1043px;top:511px;width:73px;">$26,01</div>
<div class="tc n" style="left:1116px;top:511px;width:73px;">$23,41</div>
<div class="tc n" style="left:1189px;top:511px;width:73px;">$18,73</div>
<div class="tc n" style="left:1262px;top:511px;width:73px;">$14,98</div>
<div class="tc b" style="left:33px;top:528px;">Office Costs</div>
<div class="tc t" style="left:249px;top:528px;">Generator Charges</div>
<div class="tc n" style="left:459px;top:528px;width:73px;">$82,00</div>
<div class="tc n" style="left:532px;top:528px;width:73px;">$73,80</div>
<div class="tc n" style="left:605px;top:528px;width:73px;">$59,04</div>
<div class="tc n" style="left:678px;top:528px;width:73px;">$64,94</div>
<div class="tc n" style="left:751px;top:528px;width:73px;">$71,44</div>
<div class="tc n" style="left:824px;top:528px;width:73px;">$78,58</div>
<div class="tc n" style="left:897px;top:528px;width:73px;">$62,87</div>
<div class="tc n" style="left:970px;top:528px;width:73px;">$56,58</div>
<div class="tc n" style="left:1043px;top:528px;width:73px;">$50,92</div>
<div class="tc n" style="left:1116px;top:528px;width:73px;">$56,01</div>
<div class="tc n" style="left:1189px;top:528px;width:73px;">$61,61</div>
<div class="tc n" style="left:1262px;top:528px;width:73px;">$49,29</div>
<div class="tc b" style="left:33px;top:545px;">Office Costs</div>
<div class="tc t" style="left:249px;top:545px;">KVQA</div>
<div class="tc n" style="left:459px;top:545px;width:73px;">$320,00</div>
<div class="tc n" style="left:532px;top:545px;width:73px;">$256,00</div>
<div class="tc n" style="left:605px;top:545px;width:73px;">$256,00</div>
<div class="tc n" style="left:678px;top:545px;width:73px;">$256,00</div>
<div class="tc n" style="left:751px;top:545px;width:73px;">$204,80</div>
<div class="tc n" style="left:824px;top:545px;width:73px;">$163,84</div>
<div class="tc n" style="left:897px;top:545px;width:73px;">$196,61</div>
<div class="tc n" style="left:970px;top:545px;width:73px;">$157,29</div>
<div class="tc n" style="left:1043px;top:545px;width:73px;">$125,83</div>
<div class="tc n" style="left:1116px;top:545px;width:73px;">$113,25</div>
<div class="tc n" style="left:1189px;top:545px;width:73px;">$124,57</div>
<div class="tc n" style="left:1262px;top:545px;width:73px;">$124,57</div>
<div class="tc b" style="left:33px;top:562px;">Office Costs</div>
<div class="tc t" style="left:249px;top:562px;">Other Office Rent</div>
<div class="tc n" style="left:459px;top:562px;width:73px;">$317,00</div>
<div class="tc n" style="left:532px;top:562px;width:73px;">$253,60</div>
<div class="tc n" style="left:605px;top:562px;width:73px;">$253,60</div>
<div class="tc n" style="left:678px;top:562px;width:73px;">$278,96</div>
<div class="tc n" style="left:751px;top:562px;width:73px;">$278,96</div>
<div class="tc n" style="left:824px;top:562px;width:73px;">$223,17</div>
<div class="tc n" style="left:897px;top:562px;width:73px;">$200,85</div>
<div class="tc n" style="left:970px;top:562px;width:73px;">$180,77</div>
<div class="tc n" style="left:1043px;top:562px;width:73px;">$162,69</div>
<div class="tc n" style="left:1116px;top:562px;width:73px;">$162,69</div>
<div class="tc n" style="left:1189px;top:562px;width:73px;">$178,96</div>
<div class="tc n" style="left:1262px;top:562px;width:73px;">$143,17</div>
<div class="tc b" style="left:33px;top:579px;">Office Costs</div>
<div class="tc t" style="left:249px;top:579px;">Other Office Electricity</div>
<div class="tc n" style="left:459px;top:579px;width:73px;">$49,00</div>
<div class="tc n" style="left:532px;top:579px;width:73px;">$39,20</div>
<div class="tc n" style="left:605px;top:579px;width:73px;">$35,28</div>
<div class="tc n" style="left:678px;top:579px;width:73px;">$42,34</div>
<div class="tc n" style="left:751px;top:579px;width:73px;">$50,80</div>
<div class="tc n" style="left:824px;top:579px;width:73px;">$60,96</div>
<div class="tc n" style="left:897px;top:579px;width:73px;">$73,16</div>
<div class="tc n" style="left:970px;top:579px;width:73px;">$80,47</div>
<div class="tc n" style="left:1043px;top:579px;width:73px;">$64,38</div>
<div class="tc n" style="left:1116px;top:579px;width:73px;">$77,25</div>
<div class="tc n" style="left:1189px;top:579px;width:73px;">$92,70</div>
<div class="tc n" style="left:1262px;top:579px;width:73px;">$101,97</div>
<div class="tc b" style="left:33px;top:596px;">Office Costs</div>
<div class="tc t" style="left:249px;top:596px;">Building Maintainece</div>
<div class="tc n" style="left:459px;top:596px;width:73px;">$182,00</div>
<div class="tc n" style="left:532px;top:596px;width:73px;">$182,00</div>
<div class="tc n" style="left:605px;top:596px;width:73px;">$200,20</div>
<div class="tc n" style="left:678px;top:596px;width:73px;">$240,24</div>
<div class="tc n" style="left:751px;top:596px;width:73px;">$216,22</div>
<div class="tc n" style="left:824px;top:596px;width:73px;">$216,22</div>
<div class="tc n" style="left:897px;top:596px;width:73px;">$172,97</div>
<div class="tc n" style="left:970px;top:596px;width:73px;">$172,97</div>
<div class="tc n" style="left:1043px;top:596px;width:73px;">$155,68</div>
<div class="tc n" style="left:1116px;top:596px;width:73px;">$186,81</div>
<div class="tc n" style="left:1189px;top:596px;width:73px;">$149,45</div>
<div class="tc n" style="left:1262px;top:596px;width:73px;">$134,50</div>
<div class="tc b" style="left:33px;top:613px;">Office Costs</div>
<div class="tc t" style="left:249px;top:613px;">AC Gas and Repair</div>
<div class="tc n" style="left:459px;top:613px;width:73px;">$416,00</div>
<div class="tc n" style="left:532px;top:613px;width:73px;">$332,80</div>
<div class="tc n" style="left:605px;top:613px;width:73px;">$366,08</div>
<div class="tc n" style="left:678px;top:613px;width:73px;">$292,86</div>
<div class="tc n" style="left:751px;top:613px;width:73px;">$234,29</div>
<div class="tc n" style="left:824px;top:613px;width:73px;">$257,72</div>
<div class="tc n" style="left:897px;top:613px;width:73px;">$206,18</div>
<div class="tc n" style="left:970px;top:613px;width:73px;">$164,94</div>
<div class="tc n" style="left:1043px;top:613px;width:73px;">$148,45</div>
<div class="tc n" style="left:1116px;top:613px;width:73px;">$178,14</div>
<div class="tc n" style="left:1189px;top:613px;width:73px;">$142,51</div>
<div class="tc n" style="left:1262px;top:613px;width:73px;">$142,51</div>
<div class="tc b" style="left:33px;top:630px;">Office Costs</div>
<div class="tc t" style="left:249px;top:630px;">Furniture Purchase</div>
<div class="tc n" style="left:459px;top:630px;width:73px;">$184,00</div>
<div class="tc n" style="left:532px;top:630px;width:73px;">$165,60</div>
<div class="tc n" style="left:605px;top:630px;width:73px;">$132,48</div>
<div class="tc n" style="left:678px;top:630px;width:73px;">$119,23</div>
<div class="tc n" style="left:751px;top:630px;width:73px;">$119,23</div>
<div class="tc n" style="left:824px;top:630px;width:73px;">$95,39</div>
<div class="tc n" style="left:897px;top:630px;width:73px;">$85,85</div>
<div class="tc n" style="left:970px;top:630px;width:73px;">$85,85</div>
<div class="tc n" style="left:1043px;top:630px;width:73px;">$77,26</div>
<div class="tc n" style="left:1116px;top:630px;width:73px;">$69,54</div>
<div class="tc n" style="left:1189px;top:630px;width:73px;">$69,54</div>
<div class="tc n" style="left:1262px;top:630px;width:73px;">$62,58</div>
<div class="tc b" style="left:33px;top:647px;">Office Costs</div>
<div class="tc t" style="left:249px;top:647px;">Housekeeping Material</div>
<div class="tc n" style="left:459px;top:647px;width:73px;">$260,00</div>
<div class="tc n" style="left:532px;top:647px;width:73px;">$208,00</div>
<div class="tc n" style="left:605px;top:647px;width:73px;">$166,40</div>
<div class="tc n" style="left:678px;top:647px;width:73px;">$133,12</div>
<div class="tc n" style="left:751px;top:647px;width:73px;">$133,12</div>
<div class="tc n" style="left:824px;top:647px;width:73px;">$146,43</div>
<div class="tc n" style="left:897px;top:647px;width:73px;">$175,72</div>
<div class="tc n" style="left:970px;top:647px;width:73px;">$140,57</div>
<div class="tc n" style="left:1043px;top:647px;width:73px;">$112,46</div>
<div class="tc n" style="left:1116px;top:647px;width:73px;">$112,46</div>
<div class="tc n" style="left:1189px;top:647px;width:73px;">$134,95</div>
<div class="tc n" style="left:1262px;top:647px;width:73px;">$161,94</div>
<div class="tc b" style="left:33px;top:664px;">Office Costs</div>
<div class="tc t" style="left:249px;top:664px;">Stationary</div>
<div class="tc n" style="left:459px;top:664px;width:73px;">$485,00</div>
<div class="tc n" style="left:532px;top:664px;width:73px;">$533,50</div>
<div class="tc n" style="left:605px;top:664px;width:73px;">$480,15</div>
<div class="tc n" style="left:678px;top:664px;width:73px;">$576,18</div>
<div class="tc n" style="left:751px;top:664px;width:73px;">$691,42</div>
<div class="tc n" style="left:824px;top:664px;width:73px;">$829,70</div>
<div class="tc n" style="left:897px;top:664px;width:73px;">$746,73</div>
<div class="tc n" style="left:970px;top:664px;width:73px;">$896,08</div>
<div class="tc n" style="left:1043px;top:664px;width:73px;">$985,68</div>
<div class="tc n" style="left:1116px;top:664px;width:73px;">$1.182,82</div>
<div class="tc n" style="left:1189px;top:664px;width:73px;">$946,26</div>
<div class="tc n" style="left:1262px;top:664px;width:73px;">$1.135,51</div>
<div class="tc b" style="left:33px;top:681px;">Office Costs</div>
<div class="tc t" style="left:249px;top:681px;">Water</div>
<div class="tc n" style="left:459px;top:681px;width:73px;">$480,00</div>
<div class="tc n" style="left:532px;top:681px;width:73px;">$384,00</div>
<div class="tc n" style="left:605px;top:681px;width:73px;">$422,40</div>
<div class="tc n" style="left:678px;top:681px;width:73px;">$422,40</div>
<div class="tc n" style="left:751px;top:681px;width:73px;">$506,88</div>
<div class="tc n" style="left:824px;top:681px;width:73px;">$557,57</div>
<div class="tc n" style="left:897px;top:681px;width:73px;">$669,08</div>
<div class="tc n" style="left:970px;top:681px;width:73px;">$735,99</div>
<div class="tc n" style="left:1043px;top:681px;width:73px;">$588,79</div>
<div class="tc n" style="left:1116px;top:681px;width:73px;">$706,55</div>
<div class="tc n" style="left:1189px;top:681px;width:73px;">$706,55</div>
<div class="tc n" style="left:1262px;top:681px;width:73px;">$847,86</div>
<div class="hl" style="top:307px;"></div>
<div class="hl" style="top:324px;"></div>
<div class="hl" style="top:341px;"></div>
<div class="hl" style="top:358px;"></div>
<div class="hl" style="top:375px;"></div>
<div class="hl" style="top:392px;"></div>
<div class="hl" style="top:409px;"></div>
<div class="hl" style="top:426px;"></div>
<div class="hl" style="top:443px;"></div>
<div class="hl" style="top:460px;"></div>
<div class="hl" style="top:477px;"></div>
<div class="hl" style="top:494px;"></div>
<div class="hl" style="top:511px;"></div>
<div class="hl" style="top:528px;"></div>
<div class="hl" style="top:545px;"></div>
<div class="hl" style="top:562px;"></div>
<div class="hl" style="top:579px;"></div>
<div class="hl" style="top:596px;"></div>
<div class="hl" style="top:613px;"></div>
<div class="hl" style="top:630px;"></div>
<div class="hl" style="top:647px;"></div>
<div class="hl" style="top:664px;"></div>
<div class="hl" style="top:681px;"></div>
<div class="hl" style="top:698px;"></div>
<div class="vl" style="left:246px;"></div>
<div class="vl" style="left:459px;"></div>
<div class="vl" style="left:532px;"></div>
<div class="vl" style="left:605px;"></div>
<div class="vl" style="left:678px;"></div>
<div class="vl" style="left:751px;"></div>
<div class="vl" style="left:824px;"></div>
<div class="vl" style="left:897px;"></div>
<div class="vl" style="left:970px;"></div>
<div class="vl" style="left:1043px;"></div>
<div class="vl" style="left:1116px;"></div>
<div class="vl" style="left:1189px;"></div>
<div class="vl" style="left:1262px;"></div>
</body></html>
